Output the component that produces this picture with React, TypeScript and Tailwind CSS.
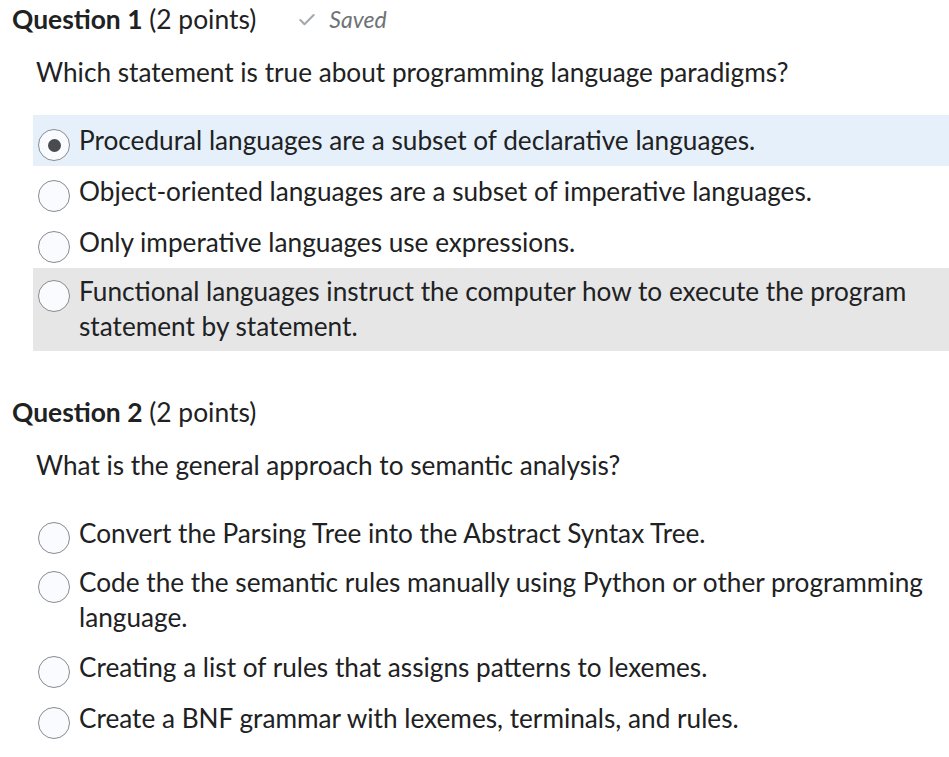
import { Check } from 'lucide-react'

type Option = { text: string; selected?: boolean; hovered?: boolean; twoLine?: boolean }

const Q1: Option[] = [
  { text: 'Procedural languages are a subset of declarative languages.', selected: true },
  { text: 'Object-oriented languages are a subset of imperative languages.' },
  { text: 'Only imperative languages use expressions.' },
  {
    text: 'Functional languages instruct the computer how to execute the program statement by statement.',
    hovered: true,
    twoLine: true,
  },
]

const Q2: Option[] = [
  { text: 'Convert the Parsing Tree into the Abstract Syntax Tree.' },
  {
    text: 'Code the the semantic rules manually using Python or other programming language.',
    twoLine: true,
  },
  { text: 'Creating a list of rules that assigns patterns to lexemes.' },
  { text: 'Create a BNF grammar with lexemes, terminals, and rules.' },
]

function Radio({ checked }: { checked?: boolean }) {
  // wrapper keeps the line height; the circle hangs a little below it
  return (
    <span className="h-[35px] w-[32px] shrink-0">
      <span className="mt-[6px] flex h-[32px] w-[32px] items-center justify-center rounded-full border border-[#868c8f] bg-[#f9fbff]">
        {checked && <span className="block h-[13px] w-[13px] rounded-full bg-[#494c4e]" />}
      </span>
    </span>
  )
}

function OptionRow({ option }: { option: Option }) {
  const bg = option.selected ? 'bg-[#e6f0fa]' : option.hovered ? 'bg-[#e6e6e6]' : ''
  const pad = option.twoLine ? 'pt-[6px] pb-[7px]' : 'py-[8px]'
  return (
    <li className={`flex items-start gap-[9px] pl-[5px] pr-4 ${pad} ${bg}`}>
      <Radio checked={option.selected} />
      <span className="text-[26.2px] leading-[35px] text-[#202122]">{option.text}</span>
    </li>
  )
}

function Question({
  number,
  prompt,
  options,
  saved,
}: {
  number: number
  prompt: string
  options: Option[]
  saved?: boolean
}) {
  return (
    <section>
      <header className="flex h-[39px] items-center pl-3">
        <h2 className="text-[26.4px] text-[#202122]">
          <span className="font-bold">Question {number}</span> (2 points)
        </h2>
        {saved && (
          <span className="ml-[41px] flex items-center gap-[12px] text-[#6e7376]">
            <Check className="h-[20px] w-[20px] text-[#a3aaae]" strokeWidth={2.5} />
            <span className="text-[23px] italic">Saved</span>
          </span>
        )}
      </header>
      <p className="mt-[16px] pl-[36px] text-[26.2px] leading-[35px] text-[#202122]">{prompt}</p>
      <ul className="mt-[25px] ml-[33px]">
        {options.map((o) => (
          <OptionRow key={o.text} option={o} />
        ))}
      </ul>
    </section>
  )
}

export default function App() {
  return (
    <div className="min-h-[757px] w-[949px] overflow-hidden bg-white font-['Lato',sans-serif]">
      <Question
        number={1}
        saved
        prompt="Which statement is true about programming language paradigms?"
        options={Q1}
      />
      <div className="mt-[42px]">
        <Question number={2} prompt="What is the general approach to semantic analysis?" options={Q2} />
      </div>
    </div>
  )
}
